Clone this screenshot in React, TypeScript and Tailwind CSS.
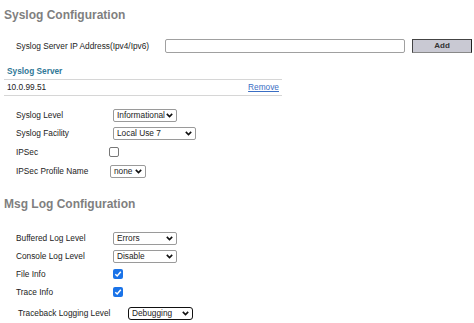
import React from 'react';

function Chevron() {
  return (
    <svg width="7" height="5" viewBox="0 0 7 5" className="shrink-0">
      <path d="M0.8 0.9 L3.5 3.6 L6.2 0.9" fill="none" stroke="#111" strokeWidth="1.6" />
    </svg>
  );
}

function Select({ value, width, strong }: { value: string; width: string; strong?: boolean }) {
  return (
    <div
      className={`flex items-center justify-between h-[13px] pl-[3px] pr-[3px] bg-white text-[8.3px] leading-none text-[#222] ${width} ${
        strong ? 'border-[1.5px] border-[#111] rounded-[3px]' : 'border border-[#9a9a9a] rounded-[2px]'
      }`}
    >
      <span>{value}</span>
      <Chevron />
    </div>
  );
}

function Checkbox({ checked }: { checked?: boolean }) {
  if (checked) {
    return (
      <div className="w-[10px] h-[10px] rounded-[2px] bg-[#1a73e8] flex items-center justify-center">
        <svg width="8" height="8" viewBox="0 0 8 8">
          <path d="M1.3 4.2 L3.2 6 L6.8 1.8" fill="none" stroke="#fff" strokeWidth="1.5" />
        </svg>
      </div>
    );
  }
  return <div className="w-[10px] h-[10px] rounded-[2px] border border-[#777] bg-white" />;
}

function Row({ label, children, h = 'h-[18px]', ctrl = 'pl-[113px]' }: { label: string; children: React.ReactNode; h?: string; ctrl?: string }) {
  return (
    <div className={`relative flex items-center ${h}`}>
      <span className="absolute left-[16px] text-[8.3px] text-[#222]">{label}</span>
      <div className={ctrl}>{children}</div>
    </div>
  );
}

export default function App() {
  return (
    <div className="w-[474px] h-[323px] bg-white overflow-hidden font-['Liberation_Sans',Arial,sans-serif]">
      {/* Syslog */}
      <h2 className="pl-[4px] pt-[7px] h-[22px] text-[12px] leading-[16px] font-bold text-[#7f7f7f]">Syslog Configuration</h2>

      <div className="mt-[17px] flex items-center h-[14px]">
        <span className="pl-[16px] w-[165px] text-[8.3px] text-[#222]">Syslog Server IP Address(Ipv4/Ipv6)</span>
        <div className="w-[240px] h-[14px] border border-[#a0a0a0] rounded-[2px] bg-white" />
        <button className="ml-[7px] w-[60px] h-[14px] bg-[#c9c9d3] border border-t-[#444] border-l-[#444] border-r-[#222] border-b-[#888] text-[8px] font-bold text-[#333] leading-none">
          Add
        </button>
      </div>

      <div className="mt-[11px] ml-[4px] w-[278px]">
        <div className="h-[16px] flex items-center pl-[3px] border-b border-[#d6d6d6] text-[8.3px] font-bold text-[#2f7896]">
          Syslog Server
        </div>
        <div className="h-[16px] flex items-center justify-between pl-[3px] pr-[3px] border-b border-[#d6d6d6] text-[8.3px] text-[#222]">
          <span>10.0.99.51</span>
          <span className="text-[#3a6ec4] underline">Remove</span>
        </div>
      </div>

      <div className="mt-[10px]">
        <Row label="Syslog Level">
          <Select value="Informational" width="w-[64px]" />
        </Row>
        <Row label="Syslog Facility">
          <Select value="Local Use 7" width="w-[83px]" />
        </Row>
        <Row label="IPSec" h="h-[20px]" ctrl="pl-[109px]">
          <Checkbox />
        </Row>
        <Row label="IPSec Profile Name" ctrl="pl-[110px]">
          <Select value="none" width="w-[36px]" />
        </Row>
      </div>

      {/* Msg log */}
      <h2 className="mt-[16px] pl-[4px] h-[16px] text-[12px] leading-[16px] font-bold text-[#7f7f7f]">Msg Log Configuration</h2>

      <div className="mt-[17px]">
        <Row label="Buffered Log Level">
          <Select value="Errors" width="w-[64px]" />
        </Row>
        <Row label="Console Log Level">
          <Select value="Disable" width="w-[64px]" />
        </Row>
        <Row label="File Info">
          <Checkbox checked />
        </Row>
        <Row label="Trace Info">
          <Checkbox checked />
        </Row>
        <div className="mt-[3px] flex items-center h-[18px]">
          <span className="pl-[18px] w-[128px] text-[8.3px] text-[#222]">Traceback Logging Level</span>
          <Select value="Debugging" width="w-[65px]" strong />
        </div>
      </div>
    </div>
  );
}
